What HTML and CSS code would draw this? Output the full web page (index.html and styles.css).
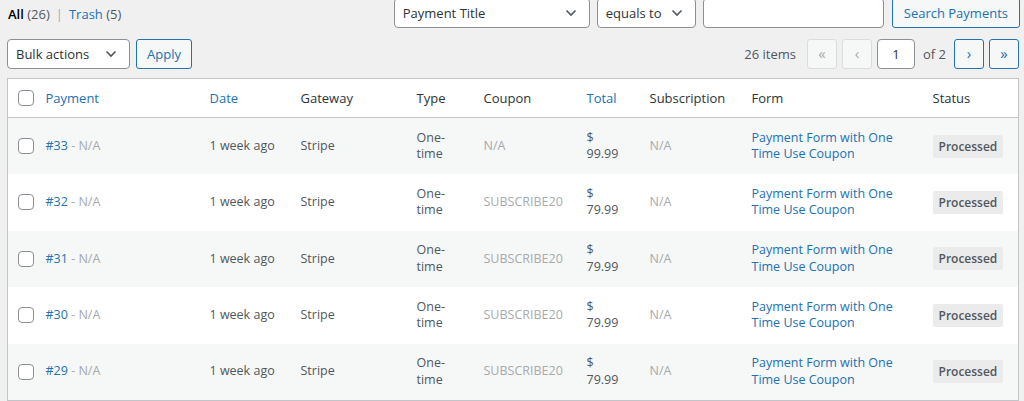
FILE: index.html
```html
<!DOCTYPE html>
<html lang="en">
<head>
    <meta charset="UTF-8">
    <meta name="viewport" content="width=device-width, initial-scale=1.0">
    <title>Payments</title>
    <link rel="stylesheet" href="styles.css">
</head>
<body>
    <div class="wrap">
        <div class="top-bar">
            <ul class="views">
                <li><span class="current">All</span> <span class="count">(26)</span></li>
                <li class="sep">|</li>
                <li><a href="#">Trash</a> <span class="count">(5)</span></li>
            </ul>
            <div class="search-box">
                <div class="select select-field"><span>Payment Title</span><svg width="12" height="8" viewBox="0 0 12 8"><path d="M1.5 1.5L6 6l4.5-4.5" fill="none" stroke="#50575e" stroke-width="1.6"/></svg></div>
                <div class="select select-op"><span>equals to</span><svg width="12" height="8" viewBox="0 0 12 8"><path d="M1.5 1.5L6 6l4.5-4.5" fill="none" stroke="#50575e" stroke-width="1.6"/></svg></div>
                <input type="text" class="search-input">
                <button class="btn btn-search">Search Payments</button>
            </div>
        </div>

        <div class="tablenav">
            <div class="bulk">
                <div class="select select-bulk"><span>Bulk actions</span><svg width="12" height="8" viewBox="0 0 12 8"><path d="M1.5 1.5L6 6l4.5-4.5" fill="none" stroke="#50575e" stroke-width="1.6"/></svg></div>
                <button class="btn">Apply</button>
            </div>
            <div class="pages">
                <span class="num-items">26 items</span>
                <span class="page-btn disabled">&laquo;</span>
                <span class="page-btn disabled">&lsaquo;</span>
                <input type="text" class="page-input" value="1">
                <span class="of">of 2</span>
                <a href="#" class="page-btn">&rsaquo;</a>
                <a href="#" class="page-btn">&raquo;</a>
            </div>
        </div>

        <table class="list">
            <colgroup>
                <col style="width: 28px">
                <col style="width: 164px">
                <col style="width: 91px">
                <col style="width: 116px">
                <col style="width: 67px">
                <col style="width: 103px">
                <col style="width: 63px">
                <col style="width: 102px">
                <col style="width: 181px">
                <col>
            </colgroup>
            <thead>
                <tr>
                    <th class="check"><input type="checkbox"></th>
                    <th class="sortable">Payment</th>
                    <th class="sortable">Date</th>
                    <th>Gateway</th>
                    <th>Type</th>
                    <th>Coupon</th>
                    <th class="sortable">Total</th>
                    <th>Subscription</th>
                    <th>Form</th>
                    <th>Status</th>
                </tr>
            </thead>
            <tbody id="rows"></tbody>
        </table>
    </div>

    <script>
        const payments = [
            { id: 33, total: "99.99", coupon: "N/A" },
            { id: 32, total: "79.99", coupon: "SUBSCRIBE20" },
            { id: 31, total: "79.99", coupon: "SUBSCRIBE20" },
            { id: 30, total: "79.99", coupon: "SUBSCRIBE20" },
            { id: 29, total: "79.99", coupon: "SUBSCRIBE20" }
        ];

        const tbody = document.getElementById("rows");
        payments.forEach(p => {
            const tr = document.createElement("tr");
            tr.innerHTML = `
                <td class="check"><input type="checkbox"></td>
                <td><a href="#">#${p.id}</a> <span class="muted">- N/A</span></td>
                <td>1 week ago</td>
                <td>Stripe</td>
                <td>One-time</td>
                <td class="muted">${p.coupon}</td>
                <td class="total">$ ${p.total}</td>
                <td class="muted">N/A</td>
                <td><a href="#">Payment Form with One Time Use Coupon</a></td>
                <td><span class="badge">Processed</span></td>`;
            tbody.appendChild(tr);
        });
    </script>
</body>
</html>
```

FILE: styles.css
```css
body {
    margin: 0;
    background-color: #f0f0f1;
    font-family: "Open Sans", "Noto Sans", sans-serif;
    font-size: 13px;
    color: #50575e;
    overflow: hidden;
}

a {
    color: #2271b1;
    text-decoration: none;
}

.wrap {
    padding: 0 5px 0 7px;
}

.top-bar {
    display: flex;
    justify-content: space-between;
    align-items: center;
    height: 30px;
    margin-top: -2px;
}

.views {
    list-style: none;
    margin: 0;
    padding: 1px 0 0 1px;
    display: flex;
    gap: 6px;
}

.views .current {
    color: #000;
    font-weight: 600;
}

.views .sep {
    color: #a7aaad;
}

.search-box {
    display: flex;
    gap: 7px;
    margin-right: -1px;
}

.select {
    box-sizing: border-box;
    height: 30px;
    background: #fff;
    border: 1px solid #8c8f94;
    border-radius: 4px;
    color: #2c3338;
    display: flex;
    align-items: center;
    justify-content: space-between;
    padding: 0 12px 0 8px;
}

.select-field {
    width: 196px;
}

.select-op {
    width: 99px;
}

.select-bulk {
    width: 123px;
}

.search-input {
    box-sizing: border-box;
    width: 181px;
    height: 30px;
    border: 1px solid #8c8f94;
    border-radius: 4px;
    background: #fff;
}

.btn {
    box-sizing: border-box;
    height: 30px;
    padding: 0 10px;
    background: #f6f7f7;
    border: 1px solid #2271b1;
    border-radius: 3px;
    color: #2271b1;
    font-family: inherit;
    font-size: 13px;
}

.btn-search {
    margin-left: 1px;
    padding: 0 11px;
}

.tablenav {
    display: flex;
    justify-content: space-between;
    align-items: center;
    margin-top: 11px;
    height: 30px;
}

.bulk {
    display: flex;
    gap: 6px;
}

.pages {
    display: flex;
    align-items: center;
    gap: 5px;
}

.num-items {
    margin-right: 6px;
}

.page-btn {
    box-sizing: border-box;
    width: 30px;
    height: 30px;
    display: flex;
    align-items: center;
    justify-content: center;
    border: 1px solid #2271b1;
    border-radius: 3px;
    background: #f6f7f7;
    color: #2271b1;
    font-size: 15px;
    padding-bottom: 2px;
}

.page-btn.disabled {
    border-color: #dcdcde;
    color: #a7aaad;
}

.page-input {
    box-sizing: border-box;
    width: 38px;
    height: 30px;
    border: 1px solid #8c8f94;
    border-radius: 4px;
    text-align: center;
    font-family: inherit;
    font-size: 13px;
    color: #2c3338;
}

.of {
    margin: 0 3px;
}

.list {
    margin-top: 9px;
    width: 100%;
    table-layout: fixed;
    border-collapse: collapse;
    background: #fff;
    border: 1px solid #c3c4c7;
}

.list th {
    height: 38px;
    padding: 0 10px;
    text-align: left;
    font-weight: 400;
    font-size: 13px;
    color: #2c3338;
    border-bottom: 1px solid #c3c4c7;
}

.list th.sortable {
    color: #2271b1;
}

.list td {
    height: 56.5px;
    box-sizing: border-box;
    padding: 0 10px;
    font-size: 12.5px;
    line-height: 16.5px;
    vertical-align: middle;
    color: #50575e;
}

.list tbody tr:nth-child(odd) {
    background: #f6f7f7;
}

.list .check {
    padding: 0 0 0 10px;
}

.list td.total {
    padding-right: 16px;
}

.muted,
.list td.muted {
    color: #a7aaad;
}

input[type="checkbox"] {
    appearance: none;
    width: 16px;
    height: 16px;
    margin: 0;
    border: 1px solid #8c8f94;
    border-radius: 4px;
    background: #fff;
    display: block;
}

.badge {
    display: inline-block;
    padding: 3px 6px;
    background: #ebebeb;
    border-radius: 2px;
    font-weight: 600;
    font-size: 12px;
    line-height: 17px;
    color: #50575e;
}
```
